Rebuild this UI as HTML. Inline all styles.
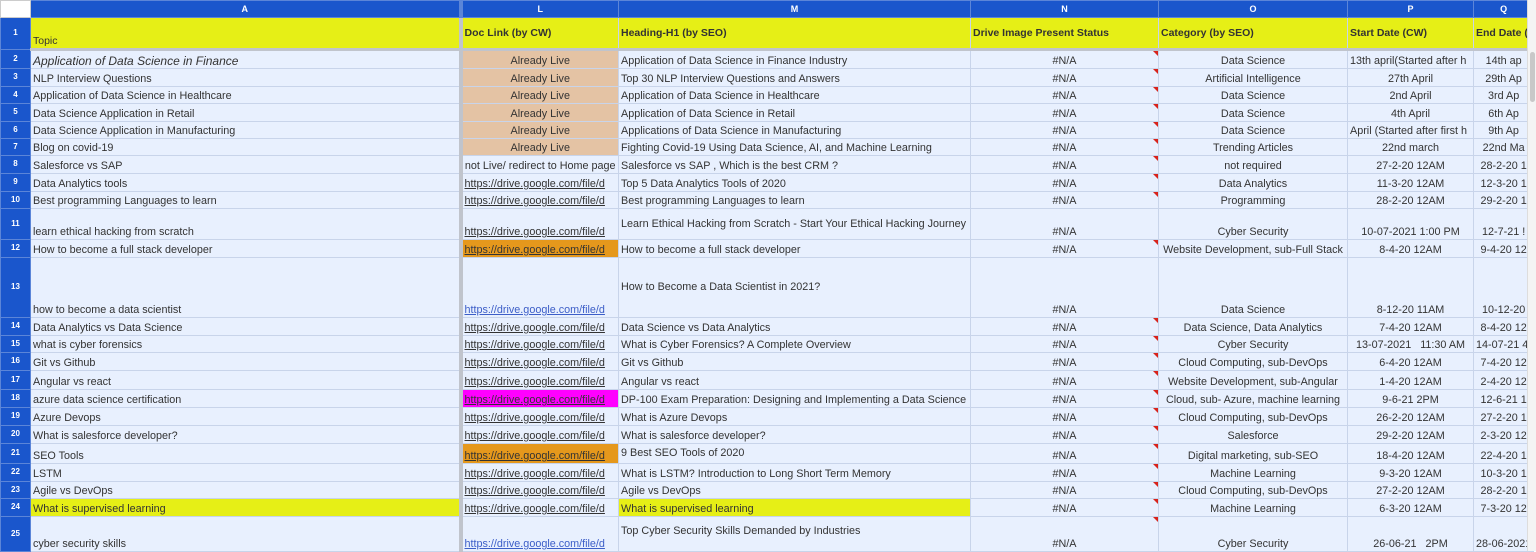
<!DOCTYPE html>
<html><head><meta charset="utf-8"><style>
body{margin:0;width:1536px;height:551px;overflow:hidden;background:#fff;font-family:"Liberation Sans",Arial,sans-serif;}
table{border-collapse:collapse;table-layout:fixed;position:absolute;left:0;top:0;}
td{font-size:10.8px;color:#333;background:#e8f0fe;border:1px solid #c8d4ea;padding:0 2px 1px 2px;vertical-align:bottom;white-space:nowrap;overflow:hidden;position:relative;line-height:12px;}
tr.h td{background:#1a56cc;color:#fff;font-weight:bold;text-align:center;vertical-align:middle;font-size:9px;border-color:#5b85d8;}
td.rn{background:#1a56cc;color:#fff;font-weight:bold;font-size:8px;text-align:center;vertical-align:middle;border-color:#5b85d8;}
td.y{background:#e6ef16;}
tr.r1 td.y{color:#333;font-size:10.5px;}
td.A{border-right:4px solid #c0c4cc;}
td.c{text-align:center;}
td.t{background:#e4c3a4;text-align:center;}
td.o{background:#e5981c;}
td.m{background:#ff00ff;}
td.l{text-decoration:underline;color:#333;}
td.lb{text-decoration:underline;color:#3c5ec8;}
td.n::after{content:"";position:absolute;right:0;top:0;border-left:5px solid transparent;border-top:5px solid #d8231b;}
td.mid{vertical-align:middle;}
#sb{position:absolute;left:1527px;top:0;width:9px;height:551px;background:#f4f4f4;border-left:1px solid #ddd;}
#sb div{position:absolute;left:2px;top:52px;width:5px;height:50px;background:#c8c8c8;border-radius:3px;}
</style></head><body>
<table>
<colgroup><col style="width:30px"><col style="width:430px"><col style="width:158px"><col style="width:352px"><col style="width:188px"><col style="width:189px"><col style="width:126px"><col style="width:55px"></colgroup>
<tr class="h" style="height:17px"><td style="background:#fff;border-color:#ccc"></td><td class="A">A</td><td>L</td><td>M</td><td>N</td><td>O</td><td>P</td><td>Q</td></tr>
<tr class="r1" style="height:32px"><td class="rn">1</td><td class="y A" style="border-bottom:3px solid #c0c4cc;font-weight:normal">Topic</td><td class="y mid" style="font-weight:bold;border-bottom:3px solid #c0c4cc">Doc Link (by CW)</td><td class="y mid" style="font-weight:bold;border-bottom:3px solid #c0c4cc">Heading-H1 (by SEO)</td><td class="y mid" style="font-weight:bold;border-bottom:3px solid #c0c4cc">Drive Image Present Status</td><td class="y mid" style="font-weight:bold;border-bottom:3px solid #c0c4cc">Category (by SEO)</td><td class="y mid" style="font-weight:bold;border-bottom:3px solid #c0c4cc">Start Date (CW)</td><td class="y mid" style="font-weight:bold;border-bottom:3px solid #c0c4cc">End Date (</td></tr>
<tr style="height:19px"><td class="rn">2</td><td class="A" style="font-style:italic;font-size:12px">Application of Data Science in Finance</td><td class="t">Already Live</td><td>Application of Data Science in Finance Industry</td><td class="c n">#N/A</td><td class="c">Data Science</td><td>13th april(Started after h</td><td class="c">14th ap</td></tr>
<tr style="height:18px"><td class="rn">3</td><td class="A">NLP Interview Questions</td><td class="t">Already Live</td><td>Top 30 NLP Interview Questions and Answers</td><td class="c n">#N/A</td><td class="c">Artificial Intelligence</td><td class="c">27th April</td><td class="c">29th Ap</td></tr>
<tr style="height:17px"><td class="rn">4</td><td class="A">Application of Data Science in Healthcare</td><td class="t">Already Live</td><td>Application of Data Science in Healthcare</td><td class="c n">#N/A</td><td class="c">Data Science</td><td class="c">2nd April</td><td class="c">3rd Ap</td></tr>
<tr style="height:18px"><td class="rn">5</td><td class="A">Data Science Application in Retail</td><td class="t">Already Live</td><td>Application of Data Science in Retail</td><td class="c n">#N/A</td><td class="c">Data Science</td><td class="c">4th April</td><td class="c">6th Ap</td></tr>
<tr style="height:17px"><td class="rn">6</td><td class="A">Data Science Application in Manufacturing</td><td class="t">Already Live</td><td>Applications of Data Science in Manufacturing</td><td class="c n">#N/A</td><td class="c">Data Science</td><td>April (Started after first h</td><td class="c">9th Ap</td></tr>
<tr style="height:17px"><td class="rn">7</td><td class="A">Blog on covid-19</td><td class="t">Already Live</td><td>Fighting Covid-19 Using Data Science, AI, and Machine Learning</td><td class="c n">#N/A</td><td class="c">Trending Articles</td><td class="c">22nd march</td><td class="c">22nd Ma</td></tr>
<tr style="height:18px"><td class="rn">8</td><td class="A">Salesforce vs SAP</td><td class="c">not Live/ redirect to Home page</td><td>Salesforce vs SAP , Which is the best CRM ?</td><td class="c n">#N/A</td><td class="c">not required</td><td class="c">27-2-20 12AM</td><td class="c">28-2-20 1</td></tr>
<tr style="height:18px"><td class="rn">9</td><td class="A">Data Analytics tools</td><td class="l">https://drive.google.com/file/d</td><td>Top 5 Data Analytics Tools of 2020</td><td class="c n">#N/A</td><td class="c">Data Analytics</td><td class="c">11-3-20 12AM</td><td class="c">12-3-20 1</td></tr>
<tr style="height:17px"><td class="rn">10</td><td class="A">Best programming Languages to learn</td><td class="l">https://drive.google.com/file/d</td><td>Best programming Languages to learn</td><td class="c n">#N/A</td><td class="c">Programming</td><td class="c">28-2-20 12AM</td><td class="c">29-2-20 1</td></tr>
<tr style="height:31px"><td class="rn">11</td><td class="A">learn ethical hacking from scratch</td><td class="l">https://drive.google.com/file/d</td><td class="mid">Learn Ethical Hacking from Scratch - Start Your Ethical Hacking Journey</td><td class="c">#N/A</td><td class="c">Cyber Security</td><td class="c">10-07-2021 1:00 PM</td><td class="c">12-7-21 !</td></tr>
<tr style="height:18px"><td class="rn">12</td><td class="A">How to become a full stack developer</td><td class="l o">https://drive.google.com/file/d</td><td>How to become a full stack developer</td><td class="c n">#N/A</td><td class="c">Website Development, sub-Full Stack</td><td class="c">8-4-20 12AM</td><td class="c">9-4-20 12</td></tr>
<tr style="height:60px"><td class="rn">13</td><td class="A">how to become a data scientist</td><td class="lb">https://drive.google.com/file/d</td><td class="mid">How to Become a Data Scientist in 2021?</td><td class="c">#N/A</td><td class="c">Data Science</td><td class="c">8-12-20 11AM</td><td class="c">10-12-20</td></tr>
<tr style="height:18px"><td class="rn">14</td><td class="A">Data Analytics vs Data Science</td><td class="l">https://drive.google.com/file/d</td><td>Data Science vs Data Analytics</td><td class="c n">#N/A</td><td class="c">Data Science, Data Analytics</td><td class="c">7-4-20 12AM</td><td class="c">8-4-20 12</td></tr>
<tr style="height:17px"><td class="rn">15</td><td class="A">what is cyber forensics</td><td class="l">https://drive.google.com/file/d</td><td>What is Cyber Forensics? A Complete Overview</td><td class="c n">#N/A</td><td class="c">Cyber Security</td><td class="c">13-07-2021&nbsp;&nbsp; 11:30 AM</td><td>14-07-21 4</td></tr>
<tr style="height:18px"><td class="rn">16</td><td class="A">Git vs Github</td><td class="l">https://drive.google.com/file/d</td><td>Git vs Github</td><td class="c n">#N/A</td><td class="c">Cloud Computing, sub-DevOps</td><td class="c">6-4-20 12AM</td><td class="c">7-4-20 12</td></tr>
<tr style="height:19px"><td class="rn">17</td><td class="A">Angular vs react</td><td class="l">https://drive.google.com/file/d</td><td>Angular vs react</td><td class="c n">#N/A</td><td class="c">Website Development, sub-Angular</td><td class="c">1-4-20 12AM</td><td class="c">2-4-20 12</td></tr>
<tr style="height:18px"><td class="rn">18</td><td class="A">azure data science certification</td><td class="l m">https://drive.google.com/file/d</td><td>DP-100 Exam Preparation: Designing and Implementing a Data Science</td><td class="c n">#N/A</td><td class="c">Cloud, sub- Azure, machine learning</td><td class="c">9-6-21 2PM</td><td class="c">12-6-21 1</td></tr>
<tr style="height:18px"><td class="rn">19</td><td class="A">Azure Devops</td><td class="l">https://drive.google.com/file/d</td><td>What is Azure Devops</td><td class="c n">#N/A</td><td class="c">Cloud Computing, sub-DevOps</td><td class="c">26-2-20 12AM</td><td class="c">27-2-20 1</td></tr>
<tr style="height:18px"><td class="rn">20</td><td class="A">What is salesforce developer?</td><td class="l">https://drive.google.com/file/d</td><td>What is salesforce developer?</td><td class="c n">#N/A</td><td class="c">Salesforce</td><td class="c">29-2-20 12AM</td><td class="c">2-3-20 12</td></tr>
<tr style="height:20px"><td class="rn">21</td><td class="A">SEO Tools</td><td class="l o">https://drive.google.com/file/d</td><td class="mid">9 Best SEO Tools of 2020</td><td class="c n">#N/A</td><td class="c">Digital marketing, sub-SEO</td><td class="c">18-4-20 12AM</td><td class="c">22-4-20 1</td></tr>
<tr style="height:18px"><td class="rn">22</td><td class="A">LSTM</td><td class="l">https://drive.google.com/file/d</td><td>What is LSTM? Introduction to Long Short Term Memory</td><td class="c n">#N/A</td><td class="c">Machine Learning</td><td class="c">9-3-20 12AM</td><td class="c">10-3-20 1</td></tr>
<tr style="height:17px"><td class="rn">23</td><td class="A">Agile vs DevOps</td><td class="l">https://drive.google.com/file/d</td><td>Agile vs DevOps</td><td class="c n">#N/A</td><td class="c">Cloud Computing, sub-DevOps</td><td class="c">27-2-20 12AM</td><td class="c">28-2-20 1</td></tr>
<tr style="height:18px"><td class="rn">24</td><td class="A y">What is supervised learning</td><td class="l">https://drive.google.com/file/d</td><td class="y">What is supervised learning</td><td class="c n">#N/A</td><td class="c">Machine Learning</td><td class="c">6-3-20 12AM</td><td class="c">7-3-20 12</td></tr>
<tr style="height:35px"><td class="rn">25</td><td class="A">cyber security skills</td><td class="lb">https://drive.google.com/file/d</td><td style="vertical-align:top;padding-top:8px">Top Cyber Security Skills Demanded by Industries</td><td class="c n">#N/A</td><td class="c">Cyber Security</td><td class="c">26-06-21&nbsp;&nbsp; 2PM</td><td>28-06-2021</td></tr>
</table>
<div id="sb"><div></div></div>
</body></html>
